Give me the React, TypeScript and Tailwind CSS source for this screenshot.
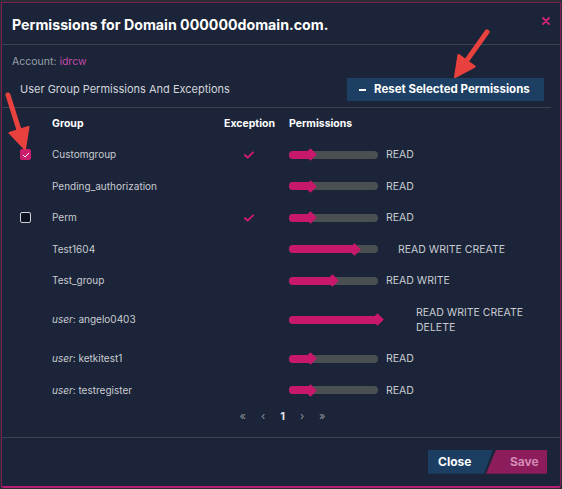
import React from "react";

type Row = {
  name: string;
  user?: boolean;
  box?: "on" | "off";
  exc?: boolean;
  level: number;
  tall?: boolean;
};

const rows: Row[] = [
  { name: "Customgroup", box: "on", exc: true, level: 1 },
  { name: "Pending_authorization", level: 1 },
  { name: "Perm", box: "off", exc: true, level: 1 },
  { name: "Test1604", level: 3 },
  { name: "Test_group", level: 2 },
  { name: "angelo0403", user: true, level: 4, tall: true },
  { name: "ketkitest1", user: true, level: 1 },
  { name: "testregister", user: true, level: 1 },
];

const labels = ["", "READ", "READ WRITE", "READ WRITE CREATE", "READ WRITE CREATE DELETE"];

function Slider({ level }: { level: number }) {
  const center = level === 4 ? 88 : 22 * level - 0.5;
  return (
    <div className="relative w-[89px] h-[8px] rounded-full bg-[#4a4f51] shrink-0">
      <div
        className="absolute left-0 top-0 h-full rounded-full bg-[#c8186b]"
        style={{ width: level === 4 ? 89 : center }}
      />
      <div
        className="absolute top-[-0.5px] w-[9px] h-[9px] rotate-45 bg-[#c8186b]"
        style={{ left: center - 4.5 }}
      />
    </div>
  );
}

function Check() {
  return (
    <svg width="10" height="8" viewBox="0 0 10 8" className="block">
      <path d="M1 4.2 L3.7 6.6 L9 1.4" fill="none" stroke="#d01a70" strokeWidth="2" strokeLinecap="round" strokeLinejoin="round" />
    </svg>
  );
}

function Arrow({ x1, y1, x2, y2 }: { x1: number; y1: number; x2: number; y2: number }) {
  const dx = x2 - x1;
  const dy = y2 - y1;
  const len = Math.hypot(dx, dy);
  const ux = dx / len;
  const uy = dy / len;
  const bx = x2 - 20 * ux;
  const by = y2 - 20 * uy;
  const px = -uy * 10;
  const py = ux * 10;
  return (
    <g>
      <line x1={x1} y1={y1} x2={bx + ux * 2} y2={by + uy * 2} stroke="#e8413e" strokeWidth="5" strokeLinecap="round" />
      <polygon
        points={`${x2},${y2} ${bx + px},${by + py} ${bx - px},${by - py}`}
        fill="#e8413e"
        stroke="#e8413e"
        strokeWidth="2"
        strokeLinejoin="round"
      />
    </g>
  );
}

export default function App() {
  return (
    <div className="relative w-[562px] h-[489px] overflow-hidden bg-[#2a2d35] pt-[2px] px-[1px] font-['Inter',sans-serif]">
      <div className="flex flex-col h-[486px] bg-[#1b2438] border border-[#7d1d56] border-b-2 border-b-[#b31f72] rounded-b-[3px]">
        {/* header */}
        <div className="flex items-start justify-between h-[42px] pl-[10px] pr-[10px] border-b border-[#3a4350] shrink-0">
          <h1 className="mt-[12px] text-[14.2px] leading-[20px] font-bold text-white">
            Permissions for Domain 000000domain.com.
          </h1>
          <button className="mt-[14px] p-0">
            <svg width="8" height="8" viewBox="0 0 8 8" className="block">
              <path d="M1 1 L7 7 M7 1 L1 7" stroke="#d0237a" strokeWidth="1.8" strokeLinecap="round" />
            </svg>
          </button>
        </div>

        {/* body */}
        <div className="flex flex-col pr-[9px]">
          <p className="pl-[10px] pt-[10px] text-[10.5px] leading-[14px] text-[#9aa0a9]">
            Account: <span className="text-[#c04ca7]">idrcw</span>
          </p>
          <div className="flex items-center justify-between mt-[9px] pl-[18px] pr-[7px] pb-[6px] border-b border-[#3a4350]">
            <span className="text-[11px] text-[#d3d6db]">User Group Permissions And Exceptions</span>
            <button className="flex items-center gap-[8px] h-[23px] w-[197px] pl-[12px] bg-[#1c3f63] text-white text-[11.5px] font-bold">
              <span className="w-[7px] h-[2px] bg-white" />
              Reset Selected Permissions
            </button>
          </div>

          {/* table */}
          <div className="grid grid-cols-[50px_172px_65px_1fr] items-center h-[31px] text-[10.5px] font-bold text-white">
            <span />
            <span>Group</span>
            <span>Exception</span>
            <span>Permissions</span>
          </div>
          {rows.map((r) => (
            <div
              key={r.name}
              className={`grid grid-cols-[50px_172px_65px_1fr] items-center text-[10px] text-[#c9ccd2] ${r.tall ? "h-[46.5px]" : "h-[31.5px]"}`}
            >
              <div className="pl-[18px]">
                {r.box === "on" && (
                  <div className="flex items-center justify-center w-[11px] h-[11px] rounded-[2px] bg-[#cc1c6e]">
                    <svg width="8" height="6" viewBox="0 0 8 6" className="block">
                      <path d="M1 3 L3 5 L7 1" fill="none" stroke="#ffffff" strokeWidth="1" />
                    </svg>
                  </div>
                )}
                {r.box === "off" && (
                  <div className="w-[11px] h-[11px] rounded-[2px] border-[1.5px] border-[#cfd1d6] bg-[#0c1220]" />
                )}
              </div>
              <span>
                {r.user && <i>user</i>}
                {r.user && ": "}
                {r.name}
              </span>
              <div className="pl-[20px]">{r.exc && <Check />}</div>
              <div className="flex items-center">
                <Slider level={r.level} />
                <span
                  className={`text-[10.5px] leading-[15px] text-[#c9ccd2] ${r.level === 3 ? "ml-[20px]" : r.level === 4 ? "ml-[38px] w-[110px]" : "ml-[8px]"}`}
                >
                  {labels[r.level]}
                </span>
              </div>
            </div>
          ))}

          {/* pagination */}
          <div className="flex items-center justify-center h-[20px] text-[11px] text-[#8c919b]">
            <div className="flex items-center gap-[15px] ml-[12px]">
              <span>«</span>
              <span>‹</span>
              <span className="font-bold text-[#e0e2e6]">1</span>
              <span>›</span>
              <span>»</span>
            </div>
          </div>
        </div>

        {/* footer */}
        <div className="mt-[10.5px] flex-1 flex items-center justify-end pr-[13px] border-t border-[#3a4350]">
          <button className="h-[24px] w-[65px] pl-[10px] text-left bg-[#1b3e62] text-white text-[12px] font-bold [clip-path:polygon(0_0,100%_0,calc(100%-9px)_100%,0_100%)]">
            Close
          </button>
          <button className="-ml-[7px] h-[24px] w-[61px] pl-[24px] text-left bg-[#8c1c5c] text-[#d48bb4] text-[12px] font-bold [clip-path:polygon(10px_0,100%_0,100%_100%,0_100%)]">
            Save
          </button>
        </div>
      </div>

      <svg className="absolute inset-0 pointer-events-none" width="562" height="489">
        <Arrow x1={487} y1={32} x2={455} y2={77} />
        <Arrow x1={8} y1={95} x2={25} y2={149} />
      </svg>
    </div>
  );
}
